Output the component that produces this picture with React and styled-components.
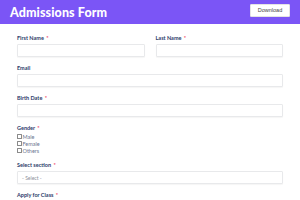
import React from 'react';
import { styled, createGlobalStyle } from 'styled-components';

const GlobalStyle = createGlobalStyle`
  body {
    margin: 0;
    background: #fff;
    font-family: 'Lato', 'Noto Sans', sans-serif;
  }
`;

export default function App() {
  return (
    <>
      <GlobalStyle />
      <Page>
        <Header>
          <Title>Admissions Form</Title>
          <DownloadButton>Download</DownloadButton>
        </Header>
        <Form>
          <Row>
            <Field>
              <Label>First Name <Star>*</Star></Label>
              <Input />
            </Field>
            <Field>
              <Label>Last Name <Star>*</Star></Label>
              <Input />
            </Field>
          </Row>
          <Field>
            <Label>Email</Label>
            <Input />
          </Field>
          <Field>
            <Label>Birth Date <Star>*</Star></Label>
            <Input />
          </Field>
          <Field>
            <Label $tight>Gender <Star>*</Star></Label>
            <Options>
              {['Male', 'Female', 'Others'].map((g) => (
                <Option key={g}>
                  <Box />
                  {g}
                </Option>
              ))}
            </Options>
          </Field>
          <Field>
            <Label>Select section <Star>*</Star></Label>
            <Select>- Select -</Select>
          </Field>
          <Field>
            <Label>Apply for Class <Star>*</Star></Label>
          </Field>
        </Form>
      </Page>
    </>
  );
}

const Page = styled.div`
  width: 300px;
  height: 200px;
  overflow: hidden;
`;

const Header = styled.div`
  display: flex;
  align-items: center;
  justify-content: space-between;
  height: 24px;
  padding: 0 10px 0 10px;
  background: #7b55f6;
`;

const Title = styled.h1`
  margin: 0;
  color: #fff;
  font-family: 'Lato', sans-serif;
  font-weight: 900;
  font-size: 12.5px;
  letter-spacing: 0.1px;
`;

const DownloadButton = styled.button`
  width: 40px;
  height: 13px;
  margin-top: -4px;
  padding: 0;
  border: 1px solid #e4e4e4;
  border-radius: 1px;
  background: #fff;
  color: #444;
  font-family: 'Liberation Sans', sans-serif;
  font-size: 5.5px;
`;

const Form = styled.div`
  display: flex;
  flex-direction: column;
  gap: 8px;
  padding: 11px 17px 0 17px;
`;

const Row = styled.div`
  display: flex;
  gap: 11px;
  & > * {
    flex: 1;
  }
`;

const Field = styled.div`
  display: flex;
  flex-direction: column;
`;

const Label = styled.label`
  height: 7px;
  line-height: 7px;
  margin-bottom: ${(p) => (p.$tight ? '1px' : '2px')};
  color: #2d3b6a;
  font-size: 5.5px;
  font-weight: 700;
`;

const Star = styled.span`
  color: #f0506e;
  margin-left: 1px;
`;

const Input = styled.div`
  box-sizing: border-box;
  height: 13px;
  border: 1px solid #e8e9eb;
  border-radius: 1px;
  box-shadow: 0 1px 1px rgba(0, 0, 0, 0.04);
  background: #fff;
`;

const Select = styled(Input)`
  display: flex;
  align-items: center;
  padding-left: 4px;
  color: #8a8f99;
  font-size: 5px;
`;

const Options = styled.div`
  display: flex;
  flex-direction: column;
`;

const Option = styled.div`
  display: flex;
  align-items: center;
  gap: 1px;
  height: 7px;
  color: #6c7691;
  font-size: 5.5px;
`;

const Box = styled.span`
  box-sizing: border-box;
  width: 4.5px;
  height: 4.5px;
  border: 0.7px solid #8a8a8a;
  border-radius: 0.5px;
`;
